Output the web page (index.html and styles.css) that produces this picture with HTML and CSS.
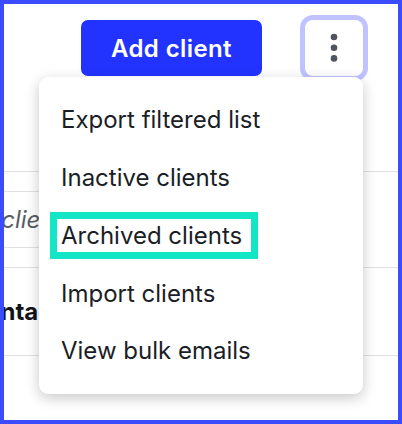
FILE: index.html
```html
<!DOCTYPE html>
<html lang="en">
<head>
<meta charset="utf-8">
<title>Clients</title>
<link rel="stylesheet" href="styles.css">
</head>
<body>
<div class="frame">
  <div class="header">
    <button class="btn-add">Add client</button>
    <button class="btn-more" aria-label="More actions">
      <svg width="8" height="30" viewBox="0 0 8 30"><circle cx="4" cy="4" r="3.3" fill="#50545c"/><circle cx="4" cy="14.7" r="3.3" fill="#50545c"/><circle cx="4" cy="25.4" r="3.3" fill="#50545c"/></svg>
    </button>
  </div>
  <div class="filters">
    <div class="search">Search clients</div>
  </div>
  <div class="table-head">
    <span class="col">Contact</span>
  </div>
  <div class="menu">
    <div class="item">Export filtered list</div>
    <div class="item">Inactive clients</div>
    <div class="item"><span class="focus">Archived clients</span></div>
    <div class="item">Import clients</div>
    <div class="item">View bulk emails</div>
  </div>
</div>
</body>
</html>
```

FILE: styles.css
```css
html, body {
  margin: 0;
  padding: 0;
  background: #ffffff;
}
.frame {
  width: 402px;
  height: 424px;
  box-sizing: border-box;
  border: 4px solid #3b4cff;
  position: relative;
  overflow: hidden;
  font-family: Inter, "Noto Sans", sans-serif;
  background: #ffffff;
}
.header {
  display: flex;
  justify-content: flex-end;
  align-items: flex-start;
  gap: 43px;
  padding: 16px 35px 0 0;
}
.btn-add {
  width: 181px;
  height: 56px;
  border: none;
  border-radius: 7px;
  background: #2233ff;
  color: #ffffff;
  font-family: Inter, sans-serif;
  font-weight: 600;
  font-size: 24px;
  letter-spacing: 0.4px;
  padding: 0;
}
.btn-more {
  width: 58px;
  height: 56px;
  border: none;
  border-radius: 8px;
  background: #ffffff;
  box-shadow: 0 0 0 5px #c0c3ff;
  display: flex;
  align-items: center;
  justify-content: center;
  padding: 0;
}
.filters {
  margin-top: 95px;
  border-top: 1px solid #e2e2e2;
  border-bottom: 1px solid #e2e2e2;
  padding: 19px 0;
}
.search {
  margin-left: -104px;
  width: 380px;
  height: 55px;
  border-top: 1px solid #e2e2e2;
  border-bottom: 1px solid #e2e2e2;
  display: flex;
  align-items: center;
  padding-left: 14px;
  font-size: 24px;
  font-style: italic;
  color: #5a5d64;
}
.table-head {
  height: 87px;
  border-bottom: 1px solid #e2e2e2;
  display: flex;
  align-items: center;
  margin-left: -36px;
}
.col {
  font-size: 24px;
  font-weight: 700;
  color: #111318;
}
.menu {
  position: absolute;
  left: 35px;
  top: 73px;
  width: 324px;
  box-sizing: border-box;
  padding: 14px 0;
  background: #ffffff;
  border-radius: 9px;
  box-shadow: 0 4px 14px rgba(0, 0, 0, 0.22);
}
.item {
  height: 57.75px;
  display: flex;
  align-items: center;
  padding-left: 22px;
  font-size: 24px;
  color: #1b1e26;
}
.focus {
  margin-left: -4px;
  padding: 2px 9px 2px 4px;
  outline: 7px solid #13e6c7;
}
```
